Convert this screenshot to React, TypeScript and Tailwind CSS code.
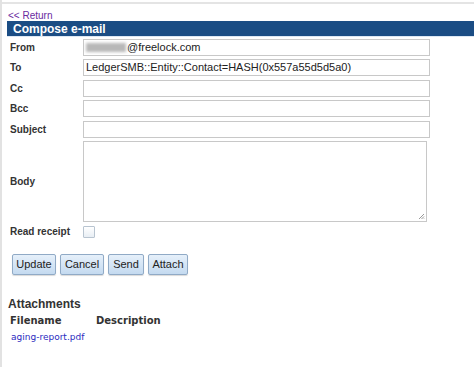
import React from 'react'

const ROWS = [
  { label: 'From', top: 'mt-[2px]', value: 'from' },
  { label: 'To', top: 'mt-[3px]', value: 'LedgerSMB::Entity::Contact=HASH(0x557a55d5d5a0)' },
  { label: 'Cc', top: 'mt-[4px]', value: '' },
  { label: 'Bcc', top: 'mt-[3px]', value: '' },
  { label: 'Subject', top: 'mt-[4px]', value: '' },
]

function Field({ value }: { value: string }) {
  return (
    <div className="h-[17px] w-[347px] border border-[#c8c8c8] bg-white flex items-center pl-[2px] text-[11px] text-[#222] leading-none">
      {value === 'from' ? (
        <>
          <span className="inline-block h-[9px] w-[40px] bg-[#b8b8b8] blur-[1.5px] mr-[1px]" />
          <span>@freelock.com</span>
        </>
      ) : (
        value
      )}
    </div>
  )
}

function Button({ children, w }: { children: React.ReactNode; w: string }) {
  return (
    <button
      className={`${w} h-[21px] rounded-[2px] border border-[#90aac6] bg-gradient-to-b from-[#e6f0fa] to-[#c4daf0] text-[11px] text-[#222] shadow-[0_1px_1px_rgba(0,0,0,0.15)]`}
    >
      {children}
    </button>
  )
}

export default function App() {
  return (
    <div className="w-[474px] h-[367px] bg-white flex font-['Liberation_Sans',Arial,sans-serif] overflow-hidden">
      {/* left frame edge */}
      <div className="w-[2px] bg-[#e2e2e2] flex-shrink-0" />
      <div className="flex-1 flex flex-col">
        <div className="h-[3px] mt-[2px] border-t-2 border-[#e4e4e4]" />
        <div className="pl-[5px] flex flex-col">
          <a className="text-[10px] leading-none text-[#6a2ba0] ml-[1px] mt-[6px] h-[10px]">&lt;&lt; Return</a>
          <div className="h-[16px] bg-[#1b4d84] text-white font-bold text-[12px] leading-[16px] pl-[6px] border-b border-[#dde8f4]">
            Compose e-mail
          </div>

          <div className="pl-[3px] flex flex-col">
            {ROWS.map(r => (
              <div key={r.label} className={`flex items-center ${r.top}`}>
                <div className="w-[73px] text-[10px] font-bold text-[#333]">{r.label}</div>
                <Field value={r.value} />
              </div>
            ))}

            <div className="flex items-center mt-[3px]">
              <div className="w-[73px] text-[10px] font-bold text-[#333]">Body</div>
              <div className="relative h-[81px] w-[344px] border border-[#c8c8c8] bg-white">
                <svg className="absolute right-[1px] bottom-[1px]" width="7" height="7" viewBox="0 0 7 7">
                  <path d="M6 1L1 6M6 3.5L3.5 6M6 5.5L5.5 6" stroke="#999" strokeWidth="1" />
                </svg>
              </div>
            </div>

            <div className="flex items-center mt-[4px]">
              <div className="w-[73px] text-[10px] font-bold text-[#333] leading-[12px]">Read receipt</div>
              <div className="h-[12px] w-[12px] border border-[#b8c4d0] rounded-[1px] bg-gradient-to-b from-white to-[#e8eef4]" />
            </div>

            <div className="flex gap-[4px] mt-[16px] ml-[2px]">
              <Button w="w-[44px]">Update</Button>
              <Button w="w-[44px]">Cancel</Button>
              <Button w="w-[36px]">Send</Button>
              <Button w="w-[40px]">Attach</Button>
            </div>
          </div>

          <div className="mt-[23px] ml-[1px] text-[12px] font-bold text-[#333] leading-none">Attachments</div>
          <div className="flex mt-[3px] ml-[3px] font-['DejaVu_Sans',Verdana,sans-serif] text-[10px] font-bold text-[#333]">
            <div className="w-[86px]">Filename</div>
            <div>Description</div>
          </div>
          <a className="mt-[3px] ml-[4px] font-['DejaVu_Sans',Verdana,sans-serif] text-[9px] text-[#2a2ac0]">
            aging-report.pdf
          </a>
        </div>
      </div>
    </div>
  )
}
